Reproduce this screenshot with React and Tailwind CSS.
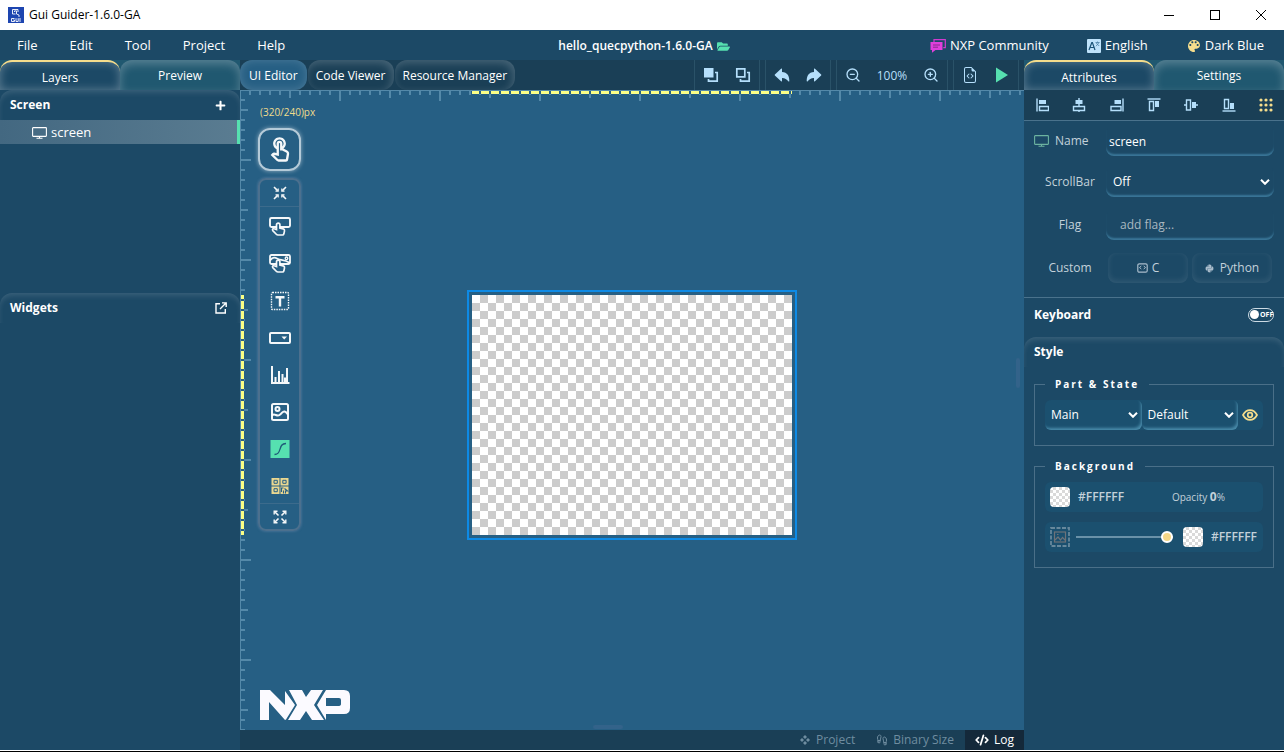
import React from "react";
import { IoArrowUndo, IoArrowRedo } from "react-icons/io5";
import { IoMdColorPalette } from "react-icons/io";
import { FaFolderOpen, FaPlus, FaPython } from "react-icons/fa";
import { BsFileEarmarkCode } from "react-icons/bs";
import { MdOutlineTouchApp } from "react-icons/md";
import { ZoomIn, ZoomOut, Footprints, CodeXml } from "lucide-react";

function Monitor({ className }) {
  return (
    <svg viewBox="0 0 15 12" className={className} fill="none" stroke="currentColor" aria-hidden="true">
      <rect x="0.6" y="0.6" width="13.8" height="8.8" rx="0.6" strokeWidth="1.1" />
      <path d="M7.5 9.5v1.6M4.5 11.3h6" strokeWidth="1.1" />
    </svg>
  );
}

function AppIcon() {
  return (
    <svg viewBox="0 0 16 16" className="size-4" aria-hidden="true">
      <rect width="16" height="16" fill="#1d45b0" />
      <g fill="none" stroke="#fff" strokeWidth="0.9">
        <path d="M7.500 7H4.500V2.500h5.500V5M6.500 5V3.900h2V7l2.500 1v2" />
        <path d="M6.500 11.500H3.500v3H6.500v-1.500H5.200M8 11.200v3.300h2.200v-3.300M12 11v4" />
      </g>
    </svg>
  );
}

function WindowControls() {
  return (
    <div className="flex text-black">
      <button aria-label="Minimize" className="flex h-[30px] w-[46px] items-center justify-center">
        <svg viewBox="0 0 12 12" className="size-3" stroke="currentColor"><path d="M1 6.500h10" /></svg>
      </button>
      <button aria-label="Maximize" className="flex h-[30px] w-[46px] items-center justify-center">
        <svg viewBox="0 0 12 12" className="size-3" stroke="currentColor" fill="none"><rect x="1.5" y="1.5" width="9" height="9" /></svg>
      </button>
      <button aria-label="Close" className="flex h-[30px] w-[46px] items-center justify-center">
        <svg viewBox="0 0 12 12" className="size-3" stroke="currentColor"><path d="M1 1l10 10M11 1L1 11" /></svg>
      </button>
    </div>
  );
}

function MenuBar() {
  return (
    <header className="grid h-[30px] shrink-0 grid-cols-[1fr_auto_1fr] items-center bg-[#1c4966] pt-[2px] text-[13px]">
      <nav className="flex items-center gap-8 pl-[17px]">
        {["File", "Edit", "Tool", "Project", "Help"].map((m) => (
          <button key={m}>{m}</button>
        ))}
      </nav>
      <div className="flex items-center gap-1 pl-1 text-xs font-semibold">
        hello_quecpython-1.6.0-GA
        <FaFolderOpen className="size-[13px] text-[#56e0b0]" />
      </div>
      <div className="flex items-center justify-end gap-[38px] pr-5">
        <a href="#community" className="flex items-center gap-1">
          <svg viewBox="0 0 16 14" className="h-[14px] w-4" aria-hidden="true">
            <path d="M4 3.500V0.700h11.300v8h-2" fill="none" stroke="#d03bd0" strokeWidth="1.2" />
            <path d="M0.500 3h12v8H5.500l-3.500 2.800V11H0.500z" fill="#e03fdc" />
            <path d="M3 6h7M3 8.200h5" stroke="#8a2a90" strokeWidth="1" />
          </svg>
          NXP Community
        </a>
        <button className="flex items-center gap-1">
          <svg viewBox="0 0 14 14" className="size-[14px]" aria-hidden="true">
            <rect width="14" height="14" rx="1" fill="#bfe3fb" />
            <path d="M2 11L4.800 3.500h0.600L8 11M3 8.500h4" fill="none" stroke="#1c5478" strokeWidth="1.2" />
            <path d="M8.500 3.500h4M10.500 2.500v1M9 7.200l3-3.500M9.200 4l3 3" fill="none" stroke="#4b82a6" strokeWidth="0.800" />
          </svg>
          English
        </button>
        <button className="flex items-center gap-[3px]">
          <IoMdColorPalette className="size-4 text-[#f5dd8c]" />
          Dark Blue
        </button>
      </div>
    </header>
  );
}

function PanelTabs({ active, other }) {
  return (
    <div className="flex h-[30px] shrink-0 bg-[#205870] text-xs">
      <button className="flex-1 rounded-t-xl border-t-2 border-[#f5dd8c] bg-[#1c4966] pt-1 shadow-[inset_0_0_10px_rgba(255,255,255,0.3)]">
        {active}
      </button>
      <button className="flex-1 rounded-t-xl bg-[#205870] pt-[2px] shadow-[inset_0_4px_10px_rgba(255,255,255,0.25)]">{other}</button>
    </div>
  );
}

function SectionHeader({ title, children }) {
  return (
    <div className="flex h-[30px] shrink-0 items-center justify-between rounded-t-xl px-[10px] shadow-[inset_0_4px_6px_-2px_rgba(255,255,255,0.15)]">
      <h2 className="text-xs font-bold">{title}</h2>
      {children}
    </div>
  );
}

function LeftPanel() {
  return (
    <aside className="flex w-60 shrink-0 flex-col bg-[#1c4966]">
      <PanelTabs active="Layers" other="Preview" />
      <SectionHeader title="Screen">
        <button aria-label="Add screen" className="pr-1"><FaPlus className="size-[11px]" /></button>
      </SectionHeader>
      <div className="flex h-[173px] flex-col">
        <button className="flex h-6 w-full items-center gap-1 border-r-[3px] border-[#56e0b0] bg-linear-to-r from-[#436881] to-[#5a7c91] pl-8 pt-[2px] text-[13px]">
          <Monitor className="h-3 w-[15px]" />
          screen
        </button>
      </div>
      <SectionHeader title="Widgets">
        <button aria-label="Detach widgets panel" className="pr-[3px]">
          <svg viewBox="0 0 12 12" className="size-3" fill="none" stroke="currentColor" strokeWidth="1.4" aria-hidden="true">
            <path d="M5 1.700H1v9.300h9.300V7M7 0.900h4.200V5M11 1L5 7" />
          </svg>
        </button>
      </SectionHeader>
    </aside>
  );
}

function ToolGroup({ children }) {
  return <div className="flex h-full items-center gap-[14px] border-x border-[#2a5268] px-[7px]">{children}</div>;
}

function CenterTabs() {
  return (
    <div className="flex h-[30px] shrink-0 items-center justify-between bg-[#1a3f56] pr-[5px] text-xs">
      <div className="flex h-full gap-px">
        <button className="h-full rounded-xl bg-[#265f84] px-[9px] pt-[2px] shadow-[inset_0_0_10px_rgba(255,255,255,0.18)]">UI Editor</button>
        <button className="h-full rounded-xl px-2 pt-[2px] shadow-[inset_-2px_3px_8px_rgba(255,255,255,0.2)]">Code Viewer</button>
        <button className="h-full rounded-xl px-2 pt-[2px] shadow-[inset_-2px_3px_8px_rgba(255,255,255,0.2)]">Resource Manager</button>
      </div>
      <div className="flex h-full gap-[5px] text-[#b5dffb]">
        <ToolGroup>
          <button aria-label="Bring to front" className="px-px">
            <svg viewBox="0 0 16 16" className="size-4" aria-hidden="true">
              <path d="M1 1h9.500v9.500H1z" fill="currentColor" />
              <path d="M12 5.500h2.200v8.700H5.500V12" fill="none" stroke="currentColor" strokeWidth="1.7" />
            </svg>
          </button>
          <button aria-label="Send to back" className="px-px">
            <svg viewBox="0 0 16 16" className="size-4" aria-hidden="true" fill="none" stroke="currentColor" strokeWidth="1.7">
              <path d="M1.800 1.800h8v8h-8z" />
              <path d="M12 5.500h2.200v8.700H5.500V12" />
            </svg>
          </button>
        </ToolGroup>
        <ToolGroup>
          <button aria-label="Undo"><IoArrowUndo className="size-[18px]" /></button>
          <button aria-label="Redo"><IoArrowRedo className="size-[18px]" /></button>
        </ToolGroup>
        <ToolGroup>
          <button aria-label="Zoom out" className="px-px"><ZoomOut className="size-4" /></button>
          <span className="w-8 pt-[2px] text-center">100%</span>
          <button aria-label="Zoom in" className="px-px"><ZoomIn className="size-4" /></button>
        </ToolGroup>
        <ToolGroup>
          <button aria-label="Generate code" className="px-px">
            <BsFileEarmarkCode className="size-4" />
          </button>
          <button aria-label="Run" className="px-px">
            <svg viewBox="0 0 16 16" className="size-4 text-[#56e0b0]" aria-hidden="true"><path d="M2 0.500L14 8 2 15.500z" fill="currentColor" /></svg>
          </button>
        </ToolGroup>
      </div>
    </div>
  );
}

const tickSteps = [10, 20, 30, 40, 60, 70, 80, 90];

function Rulers() {
  return (
    <>
      <svg className="absolute left-0 top-0 h-3 w-full" aria-hidden="true">
        <defs>
          <pattern id="ruler-x" width="100" height="12" patternUnits="userSpaceOnUse">
            <path d={tickSteps.map((t) => `M${t} 0v5`).join("") + "M50 0v8M0 0v11M100 0v11"} stroke="#5489a9" strokeWidth="2" />
          </pattern>
        </defs>
        <rect width="100%" height="12" fill="url(#ruler-x)" />
        <rect width="100%" height="1" fill="#5489a9" />
      </svg>
      <svg className="absolute left-0 top-0 h-full w-3" aria-hidden="true">
        <defs>
          <pattern id="ruler-y" y="-30" width="12" height="100" patternUnits="userSpaceOnUse">
            <path d={tickSteps.map((t) => `M0 ${t}h5`).join("") + "M0 50h8M0 0h11M0 100h11"} stroke="#5489a9" strokeWidth="2" />
          </pattern>
        </defs>
        <rect width="12" height="100%" fill="url(#ruler-y)" />
        <rect width="1" height="100%" fill="#5489a9" />
      </svg>
      <div className="absolute left-1/2 top-px h-[3px] w-80 -translate-x-1/2 bg-[repeating-linear-gradient(to_right,#fbff86_0_7px,#265f84_7px_9px,#fbff86_9px_10px)]" />
      <div className="absolute left-px top-1/2 -mt-[115px] h-60 w-[3px] bg-[repeating-linear-gradient(to_bottom,#fbff86_0_4px,#265f84_4px_6px,#fbff86_6px_10px)]" />
    </>
  );
}

const handPath = "M8.500 14.500V9.800a1.700 1.700 0 0 1 3.400 0V13l3.300.9c1 .3 1.500.9 1.300 1.900l-.6 3c-.2.8-.6 1.200-1.400 1.200H10c-.7 0-1.200-.2-1.700-.8L4.800 15.600c-.8-1 .2-2.400 1.400-1.900z";

const widgetTools = [
  {
    name: "Button",
    art: (
      <g fill="none" stroke="currentColor" strokeWidth="1.900">
        <rect x="2" y="3" width="20" height="9" rx="1.500" />
        <path d={handPath} fill="#265f84" strokeWidth="1.700" />
      </g>
    ),
  },
  {
    name: "Image button",
    art: (
      <g fill="none" stroke="currentColor" strokeWidth="1.800">
        <rect x="2" y="3" width="20" height="9" rx="1.500" />
        <path d="M2 8.500c3-4 5-3 8-1.500s6 0 12 4" />
        <circle cx="18.500" cy="6.300" r="1.300" strokeWidth="1.300" />
        <path d={handPath} fill="#265f84" strokeWidth="1.700" />
      </g>
    ),
  },
  {
    name: "Label",
    art: (
      <g fill="none" stroke="currentColor">
        <rect x="3.500" y="3.500" width="17" height="17" rx="1" strokeWidth="1.400" strokeDasharray="1.500 1" />
        <path d="M7.500 8.200h9M12 8v9.500" strokeWidth="2.400" />
      </g>
    ),
  },
  {
    name: "Drop-down list",
    art: (
      <g>
        <rect x="2" y="7" width="20" height="10" rx="1" fill="none" stroke="currentColor" strokeWidth="2" />
        <path d="M13.500 10.500h5.500L16.200 13.500z" fill="currentColor" />
      </g>
    ),
  },
  {
    name: "Chart",
    art: <path d="M4 3v17h17.500M7.500 19.500v-5.500M11 19.500V8M14.500 19.500V11M19 19.500V5M17 19.500v-5" fill="none" stroke="currentColor" strokeWidth="2" />,
  },
  {
    name: "Image",
    art: (
      <g fill="none" stroke="currentColor" strokeWidth="2">
        <rect x="4" y="4" width="16" height="16" rx="1.500" />
        <circle cx="9.500" cy="9" r="2" />
        <path d="M4 15.500c2.500-3 4.500 1.500 7.500-.500s3-4 5-3.500 2.500 2 3.500 3" />
      </g>
    ),
  },
  {
    name: "Line",
    art: (
      <g>
        <rect x="2.500" y="3" width="19" height="18" fill="#56e0b0" />
        <path d="M6.500 17.500c8 0 3-11 11.500-11" fill="none" stroke="#1f5a78" strokeWidth="1.300" />
      </g>
    ),
  },
  {
    name: "QR code",
    art: (
      <g>
        <path d="M3.500 4h8v7.500h-8zM12.500 4h8v7.500h-8zM3.500 12.500h8V20h-8zM12.500 12.500h8V20h-8z" fill="#e9d790" />
        <path d="M6 6.300h3.300v3H6zM14.800 6.300h3.300v3h-3.300zM6 14.700h3.300v3H6z" fill="none" stroke="#265f84" strokeWidth="1" />
        <path d="M13.500 18v-4h2M15.500 16.500v3M16.500 14.500l3 2.500h-2v2.500" fill="none" stroke="#265f84" strokeWidth="1.100" />
      </g>
    ),
  },
];

function Palette() {
  return (
    <div className="absolute left-[18px] top-[14px] flex flex-col items-start text-white/95">
      <span className="h-4 pl-[2px] text-[10px] leading-4 text-[#efdc8c]">(320/240)px</span>
      <button aria-label="Select" className="mt-2 flex size-[43px] items-center justify-center rounded-xl border-2 border-[#b4cad8] shadow-[0_0_4px_rgba(255,255,255,0.5)]">
        <MdOutlineTouchApp className="size-7" />
      </button>
      <div className="mt-[7px] flex w-[43px] flex-col items-center rounded-lg border-2 border-[#4c708e] shadow-[0_0_3px_rgba(200,190,220,0.35)]">
        <button aria-label="Collapse" className="flex h-[27px] w-full items-center justify-center border-b border-[#3c6b8c]">
          <svg viewBox="0 0 14 14" className="size-[14px]" fill="none" stroke="currentColor" strokeWidth="1.600" aria-hidden="true">
            <path d="M1 1l3.600 3.600M13 1L9.400 4.600M1 13l3.600-3.600M13 13L9.400 9.400" />
            <path d="M5.200 2.500v2.700H2.500M8.800 2.500v2.700h2.700M5.200 11.500V8.800H2.500M8.800 11.500V8.800h2.700" strokeWidth="1.200" />
          </svg>
        </button>
        <div className="flex flex-col gap-[13px] pb-[5px] pt-2">
          {widgetTools.map((w) => (
            <button key={w.name} aria-label={w.name}>
              <svg viewBox="0 0 24 24" className="block size-6" aria-hidden="true">{w.art}</svg>
            </button>
          ))}
        </div>
        <button aria-label="Expand" className="flex h-[26px] w-full items-center justify-center border-t border-[#3c6b8c]">
          <svg viewBox="0 0 14 14" className="size-[14px]" fill="none" stroke="currentColor" strokeWidth="1.600" aria-hidden="true">
            <path d="M2 2l3.500 3.500M12 2L8.500 5.500M2 12l3.500-3.500M12 12L8.500 8.500" />
            <path d="M1.200 4.500V1.200h3.300M9.500 1.200h3.300v3.300M1.200 9.500v3.300h3.300M12.800 9.500v3.300H9.500" strokeWidth="1.400" />
          </svg>
        </button>
      </div>
    </div>
  );
}

function NxpLogo() {
  return (
    <svg viewBox="0 0 90 30" className="absolute bottom-[10px] left-5 h-[30px] w-[90px]" role="img" aria-label="NXP" fill="#fbfaff">
      <path d="M0 0H10L25 15V1L35 15 26 29.500 25 30 9 12V30H0z" />
      <path d="M29 0H42L46 7 51 0H63L54 15 64 30H52L46 21 40 30H28L37 15z" />
      <path d="M66 0H84Q90 0 90 6V18Q90 24 84 24H66V30L57 15zM66 8V16H78Q81 16 81 14V10Q81 8 79 8z" fillRule="evenodd" />
    </svg>
  );
}

function CenterPanel() {
  return (
    <main className="flex min-w-0 flex-1 flex-col">
      <CenterTabs />
      <div className="relative flex flex-1 items-center justify-center bg-[#265f84] pt-[10px]">
        <Rulers />
        <Palette />
        <div className="border-2 border-[#0d8ae6] p-[3px]">
          <div className="h-60 w-80 bg-[conic-gradient(#ccc_25%,#fff_0_50%,#ccc_0_75%,#fff_0)] bg-size-[16px_16px]" />
        </div>
        <NxpLogo />
        <div className="absolute right-1 top-[268px] h-[30px] w-1 rounded-sm bg-[#33638a]" />
        <div className="absolute bottom-px left-[353px] h-1 w-[30px] rounded-sm bg-[#33638a]" />
      </div>
      <div className="flex h-5 shrink-0 items-stretch justify-end bg-[#1a3f56] text-xs text-[#6f8da0]">
        <button className="flex items-center gap-[6px] px-[10px]">
          <svg viewBox="0 0 10 10" className="size-[10px]" fill="currentColor" aria-hidden="true">
            <path d="M5 0l2 2-2 2-2-2zM5 6l2 2-2 2-2-2zM2 3l2 2-2 2-2-2zM8 3l2 2-2 2-2-2z" />
          </svg>
          Project
        </button>
        <button className="flex items-center gap-[5px] px-[11px]">
          <Footprints className="size-3" />
          Binary Size
        </button>
        <button className="flex items-center gap-[5px] bg-[#14293a] px-[10px] text-white">
          <CodeXml className="size-[14px]" strokeWidth={3} />
          Log
        </button>
      </div>
    </main>
  );
}

const alignTools = [
  { name: "Align left", solid: "M4 2h7v4H4z", line: "M4.500 8.500h9v4h-9z", bar: "M2 0.500v13" },
  { name: "Align center", solid: "M3.500 2h7v4h-7z", line: "M1.500 8.500h11v4h-11z", bar: "M7 0v2M7 6v2M7 13v1" },
  { name: "Align right", solid: "M4.500 2h6.500v4H4.500z", line: "M1 8.500h10v4H1z", bar: "M13 0.500v13" },
  { name: "Align top", solid: "M8 3h4v6H8z", line: "M2.500 3.500h4v9h-4z", bar: "M0.500 1h13" },
  { name: "Align middle", solid: "M8 4h4v6H8z", line: "M2.500 2h4v10h-4z", bar: "M0 7h2M12 7h2" },
  { name: "Align bottom", solid: "M8 5h4v6H8z", line: "M2.500 1.500h4v9h-4z", bar: "M0.500 13h13" },
];

function AlignBar() {
  return (
    <div className="flex h-[31px] shrink-0 items-center justify-between border-b border-[#4a728c] bg-[#1a3f56] px-[11px] text-[#b5dffb]">
      {alignTools.map((t) => (
        <button key={t.name} aria-label={t.name}>
          <svg viewBox="0 0 14 14" className="block size-[14px]" aria-hidden="true">
            <path d={t.solid} fill="currentColor" />
            <path d={t.line} fill="none" stroke="currentColor" strokeWidth="1.400" />
            <path d={t.bar} stroke="currentColor" strokeWidth="1.400" />
          </svg>
        </button>
      ))}
      <button aria-label="Grid">
        <svg viewBox="0 0 14 14" className="block size-[14px]" fill="#f5dd8c" aria-hidden="true">
          {[2, 7, 12].map((y) => [2, 7, 12].map((x) => <circle key={x + "-" + y} cx={x} cy={y} r="1.600" />))}
        </svg>
      </button>
    </div>
  );
}

function Chevron({ className }) {
  return (
    <svg viewBox="0 0 10 6" className={"pointer-events-none h-[6px] w-[10px] " + className} fill="none" stroke="#fff" strokeWidth="2" aria-hidden="true">
      <path d="M1 0.800l4 4 4-4" />
    </svg>
  );
}

const rowLabel = "flex w-[72px] shrink-0 items-center gap-[6px] text-xs text-[#c3d1da]";
const fieldEdge = "rounded-lg shadow-[inset_0_-3px_2px_-1px_#3a7798]";

function Attributes() {
  return (
    <div className="flex flex-col gap-[10px] px-[10px] pb-[14px] pt-1">
      <div className="flex items-center">
        <label htmlFor="attr-name" className={rowLabel}>
          <Monitor className="h-3 w-[15px] text-[#6cb3a0]" />
          Name
        </label>
        <input id="attr-name" defaultValue="screen" className={"h-[31px] min-w-0 flex-1 bg-transparent px-[3px] pt-[2px] text-xs outline-none " + fieldEdge} />
      </div>
      <div className="flex items-center">
        <label htmlFor="attr-scroll" className={rowLabel + " justify-center"}>ScrollBar</label>
        <div className="grid flex-1 items-center">
          <select id="attr-scroll" defaultValue="Off" className={"col-start-1 row-start-1 h-[31px] w-full appearance-none bg-transparent px-[7px] text-xs outline-none " + fieldEdge}>
            <option>Off</option>
            <option>On</option>
          </select>
          <Chevron className="col-start-1 row-start-1 mr-1 justify-self-end" />
        </div>
      </div>
      <div className="flex items-center pt-[2px]">
        <label htmlFor="attr-flag" className={rowLabel + " justify-center"}>Flag</label>
        <input id="attr-flag" placeholder="add flag..." className={"h-[31px] min-w-0 flex-1 bg-transparent px-[14px] text-xs outline-none placeholder:text-[#a9b8c0] " + fieldEdge} />
      </div>
      <div className="flex items-center pt-[3px]">
        <span className={rowLabel + " justify-center"}>Custom</span>
        <div className="flex flex-1 gap-1 px-[2px] text-xs text-[#c3d1da]">
          <button className="flex h-[30px] flex-1 items-center justify-center gap-1 rounded-lg shadow-[inset_0_-2px_6px_rgba(255,255,255,0.1)]">
            <svg viewBox="0 0 11 10" className="h-[10px] w-[11px]" fill="none" stroke="#a9bccb" aria-hidden="true">
              <rect x="0.800" y="0.800" width="9.400" height="8.400" rx="1.500" strokeWidth="1.200" />
              <path d="M4.300 3L2.500 4.500l1.800 1.500M6.700 3l1.800 1.500-1.800 1.500" />
            </svg>
            C
          </button>
          <button className="flex h-[30px] flex-1 items-center justify-center gap-[6px] rounded-lg shadow-[inset_0_-2px_6px_rgba(255,255,255,0.1)]">
            <FaPython className="size-[9px] text-[#a9bccb]" />
            Python
          </button>
        </div>
      </div>
    </div>
  );
}

function Swatch() {
  return <span className="size-5 shrink-0 rounded bg-[#f4f4f4] bg-[conic-gradient(#d9d9d9_25%,#fff_0_50%,#d9d9d9_0_75%,#fff_0)] bg-size-[6px_6px]" />;
}

const groupBox = "min-w-0 border border-[#4a6f88] px-[10px] pb-[15px]";
const groupTitle = "px-[10px] text-[10px] font-bold leading-4 tracking-[2px]";
const stateSelect = "col-start-1 row-start-1 h-[30px] w-full appearance-none rounded-md bg-transparent px-[6px] text-xs outline-none shadow-[inset_-2px_-3px_3px_-1px_#4a8cab]";

function StylePanel() {
  return (
    <div className="flex flex-col gap-3 px-[10px] pt-[9px]">
      <fieldset className={groupBox}>
        <legend className={groupTitle}>Part &amp; State</legend>
        <div className="mt-2 flex items-center rounded-md bg-[#1b506f] pr-[5px]">
          <div className="grid flex-1 items-center">
            <select aria-label="Part" defaultValue="Main" className={stateSelect}><option>Main</option></select>
            <Chevron className="col-start-1 row-start-1 mr-1 justify-self-end" />
          </div>
          <div className="grid flex-1 items-center">
            <select aria-label="State" defaultValue="Default" className={stateSelect}><option>Default</option></select>
            <Chevron className="col-start-1 row-start-1 mr-1 justify-self-end" />
          </div>
          <button aria-label="Show preview" className="ml-1">
            <svg viewBox="0 0 16 12" className="h-3 w-4" fill="none" stroke="#f5dd8c" strokeWidth="1.700" aria-hidden="true">
              <path d="M1 6c3.500-6.500 10.500-6.500 14 0-3.500 6.500-10.500 6.500-14 0z" />
              <circle cx="8" cy="6" r="2.300" />
            </svg>
          </button>
        </div>
      </fieldset>
      <fieldset className={groupBox}>
        <legend className={groupTitle}>Background</legend>
        <div className="mt-2 flex h-[30px] items-center gap-2 rounded-md bg-[#1b506f] px-[5px] text-xs font-semibold text-[#c3d1da]">
          <Swatch />
          <span className="flex-1">#FFFFFF</span>
          <span className="pr-[33px] text-[10px] font-normal">Opacity <b className="text-xs">0</b>%</span>
        </div>
        <div className="mt-[10px] flex h-[30px] items-center gap-[6px] rounded-md bg-[#1b506f] px-[5px] text-xs font-semibold text-[#c3d1da]">
          <svg viewBox="0 0 20 20" className="size-5 shrink-0" fill="none" aria-hidden="true">
            <rect x="1" y="1" width="18" height="18" stroke="#67889c" strokeWidth="1.800" strokeDasharray="4 1.500" />
            <rect x="4.500" y="5" width="11" height="10" stroke="#6d7278" strokeWidth="1.200" />
            <path d="M5 13l3-3 2.500 3 2-2.500 3 3M7 7.500h1.500" stroke="#6d7278" strokeWidth="1.200" />
          </svg>
          <input type="range" aria-label="Image opacity" defaultValue="100" className="h-3 w-0 min-w-0 flex-1 appearance-none bg-transparent [&::-webkit-slider-runnable-track]:h-[2px] [&::-webkit-slider-runnable-track]:bg-[#6a91a8] [&::-webkit-slider-thumb]:-mt-[5px] [&::-webkit-slider-thumb]:size-3 [&::-webkit-slider-thumb]:appearance-none [&::-webkit-slider-thumb]:rounded-full [&::-webkit-slider-thumb]:border-2 [&::-webkit-slider-thumb]:border-white [&::-webkit-slider-thumb]:bg-[#f5d787]" />
          <span className="ml-1 flex items-center gap-2 pr-px"><Swatch />#FFFFFF</span>
        </div>
      </fieldset>
    </div>
  );
}

function RightPanel() {
  return (
    <aside className="flex w-[260px] shrink-0 flex-col bg-[#1c4966]">
      <PanelTabs active="Attributes" other="Settings" />
      <AlignBar />
      <Attributes />
      <div className="flex h-10 items-center justify-between border-t border-[#4a728c] px-[10px] pb-[6px]">
        <h2 className="text-xs font-bold">Keyboard</h2>
        <button role="switch" aria-checked="false" aria-label="Keyboard" className="flex h-[14px] w-[26px] items-center gap-px rounded-full border border-[#cddbe4] px-px text-[7px] font-bold leading-none">
          <span className="size-[9px] shrink-0 rounded-full bg-white" />
          OFF
        </button>
      </div>
      <SectionHeader title="Style" />
      <StylePanel />
    </aside>
  );
}

export default function App() {
  return (
    <div className="flex h-screen flex-col bg-black font-['Open_Sans','Noto_Sans',sans-serif] text-white">
      <div className="flex h-[30px] shrink-0 items-center justify-between bg-white pl-2 text-xs text-black">
        <div className="flex items-center gap-[5px]">
          <AppIcon />
          Gui Guider-1.6.0-GA
        </div>
        <WindowControls />
      </div>
      <MenuBar />
      <div className="flex min-h-0 flex-1">
        <LeftPanel />
        <CenterPanel />
        <RightPanel />
      </div>
      <div className="h-[2px] shrink-0 border-t border-white bg-black" />
    </div>
  );
}
